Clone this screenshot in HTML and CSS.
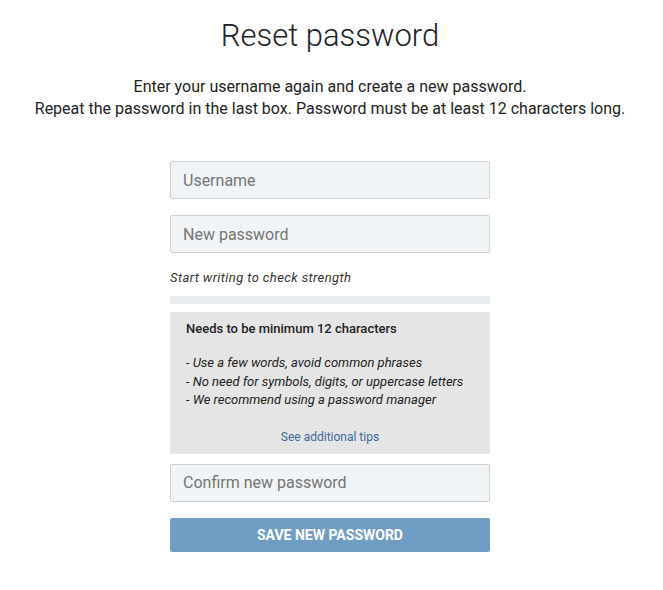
FILE: index.html
```html
<!DOCTYPE html>
<html>
<head>
<meta charset="utf-8">
<link rel="stylesheet" href="styles.css">
</head>
<body>
<main class="page">
  <h1 class="title">Reset password</h1>
  <p class="intro">Enter your username again and create a new password.<br>Repeat the password in the last box. Password must be at least 12 characters long.</p>
  <form class="form">
    <input class="field" type="text" placeholder="Username">
    <input class="field field-gap" type="password" placeholder="New password">
    <div class="hint">Start writing to check strength</div>
    <div class="meter"></div>
    <div class="tips">
      <div class="tips-head">Needs to be minimum 12 characters</div>
      <ul class="tips-list">
        <li>- Use a few words, avoid common phrases</li>
        <li>- No need for symbols, digits, or uppercase letters</li>
        <li>- We recommend using a password manager</li>
      </ul>
      <a class="tips-link" href="#">See additional tips</a>
    </div>
    <input class="field" type="password" placeholder="Confirm new password">
    <button class="save" type="button">SAVE NEW PASSWORD</button>
  </form>
</main>
</body>
</html>
```
FILE: styles.css
```css
html, body {
  margin: 0;
  padding: 0;
  background: #fff;
}
body {
  font-family: Roboto, "Liberation Sans", sans-serif;
  color: #222;
}
.page {
  display: flex;
  flex-direction: column;
  align-items: center;
  padding-right: 3px;
}
.title {
  margin: 17px 0 0;
  font-size: 31px;
  line-height: 38px;
  font-weight: 300;
  color: #222;
}
.intro {
  margin: 21px 0 0;
  font-size: 16px;
  line-height: 22px;
  text-align: center;
  color: #222;
}
.form {
  width: 320px;
  margin-top: 41px;
  display: flex;
  flex-direction: column;
}
.field {
  box-sizing: border-box;
  height: 38px;
  width: 100%;
  margin: 0;
  padding: 0 12px;
  border: 1px solid #cfd1d3;
  border-radius: 2px;
  background: #f1f4f7;
  font-family: Roboto, "Liberation Sans", sans-serif;
  font-size: 16px;
  color: #222;
}
.field::placeholder {
  color: #757575;
}
.field-gap {
  margin-top: 16px;
}
.hint {
  margin-top: 16px;
  font-size: 13px;
  line-height: 18px;
  font-style: italic;
  letter-spacing: 0.4px;
  color: #333;
}
.meter {
  margin-top: 9px;
  height: 8px;
  background: #e9ecef;
}
.tips {
  margin-top: 8px;
  margin-bottom: 10px;
  background: #e5e5e5;
  padding: 8px 16px 9px;
  display: flex;
  flex-direction: column;
  font-size: 13px;
  color: #222;
}
.tips-head {
  font-weight: 500;
  line-height: 18px;
}
.tips-list {
  list-style: none;
  margin: 16px 0 0;
  padding: 0;
  font-style: italic;
  line-height: 18.5px;
}
.tips-link {
  margin-top: 19px;
  align-self: center;
  font-size: 12px;
  line-height: 16px;
  color: #40679a;
  text-decoration: none;
}
.save {
  margin-top: 16px;
  height: 34px;
  border: none;
  border-radius: 2px;
  background: #6f9dc4;
  color: #fff;
  font-family: Roboto, "Liberation Sans", sans-serif;
  font-size: 14px;
  font-weight: 700;
}
```
